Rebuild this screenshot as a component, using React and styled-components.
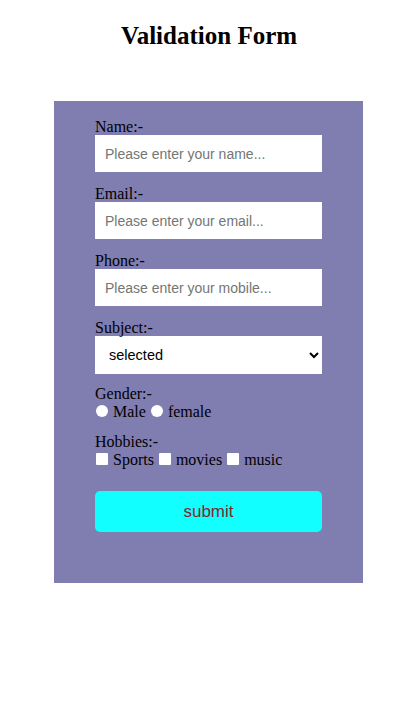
import React from 'react';
import styled, { createGlobalStyle } from 'styled-components';

const GlobalStyle = createGlobalStyle`
    body {
        margin: 0;
        background: #ffffff;
        font-family: "Liberation Serif", "Times New Roman", serif;
    }
`;

const Page = styled.div`
    width: 420px;
    padding-top: 20px;
`;

const Title = styled.h1`
    margin: 0 0 0 -2px;
    text-align: center;
    font-size: 25px;
    line-height: 32px;
    font-weight: bold;
    color: #000;
`;

const Panel = styled.form`
    width: 309px;
    margin: 49px 0 0 54px;
    padding: 14px 41px 51px;
    box-sizing: border-box;
    background-color: #807db1;
`;

const Label = styled.label`
    display: block;
    font-size: 16px;
    line-height: 17px;
    padding-top: ${p => (p.$tight ? 1 : 3)}px;
    color: #000;
`;

const Input = styled.input`
    display: block;
    width: 227px;
    height: 37px;
    margin: 0 0 10px;
    padding: 0 10px;
    box-sizing: border-box;
    border: none;
    background: #fff;
    font-family: "Liberation Sans", Arial, sans-serif;
    font-size: 14px;
    color: #000;
    outline: none;

    &::placeholder {
        color: #757575;
    }
`;

const Select = styled.select`
    display: block;
    width: 227px;
    height: 38px;
    margin: 0 0 10px;
    padding: 0 10px;
    box-sizing: border-box;
    border: none;
    border-radius: 0;
    background: #fff;
    font-family: "Liberation Sans", Arial, sans-serif;
    font-size: 14.5px;
    color: #000;
`;

const ChoiceRow = styled.div`
    font-size: 16px;
    line-height: 20px;
    color: #000;
    margin-bottom: ${p => p.$gap}px;
`;

const Choice = styled.input`
    width: 12px;
    height: 12px;
    margin: 0 1px 0 1px;
    vertical-align: 0;
    appearance: none;
    background: #fff;
    border-radius: ${p => (p.type === 'radio' ? '50%' : '1px')};
`;

const Submit = styled.button`
    display: block;
    width: 227px;
    height: 41px;
    border: none;
    border-radius: 5px;
    background-color: #11ffff;
    color: #8b1e2a;
    font-family: "Liberation Sans", Arial, sans-serif;
    font-size: 17px;
    cursor: pointer;
`;

const App = () => {
    return (
        <Page>
            <GlobalStyle />
            <Title>Validation Form</Title>
            <Panel onSubmit={e => e.preventDefault()}>
                <Label>Name:-</Label>
                <Input type="text" placeholder="Please enter your name..." />
                <Label>Email:-</Label>
                <Input type="email" placeholder="Please enter your email..." />
                <Label>Phone:-</Label>
                <Input type="tel" placeholder="Please enter your mobile..." />
                <Label>Subject:-</Label>
                <Select defaultValue="selected">
                    <option value="selected">selected</option>
                    <option value="math">Math</option>
                    <option value="science">Science</option>
                </Select>
                <Label $tight>Gender:-</Label>
                <ChoiceRow $gap={10}>
                    <Choice type="radio" name="gender" /> Male <Choice type="radio" name="gender" /> female
                </ChoiceRow>
                <Label $tight>Hobbies:-</Label>
                <ChoiceRow $gap={21}>
                    <Choice type="checkbox" /> Sports <Choice type="checkbox" /> movies <Choice type="checkbox" /> music
                </ChoiceRow>
                <Submit type="submit">submit</Submit>
            </Panel>
        </Page>
    );
};

export default App;
